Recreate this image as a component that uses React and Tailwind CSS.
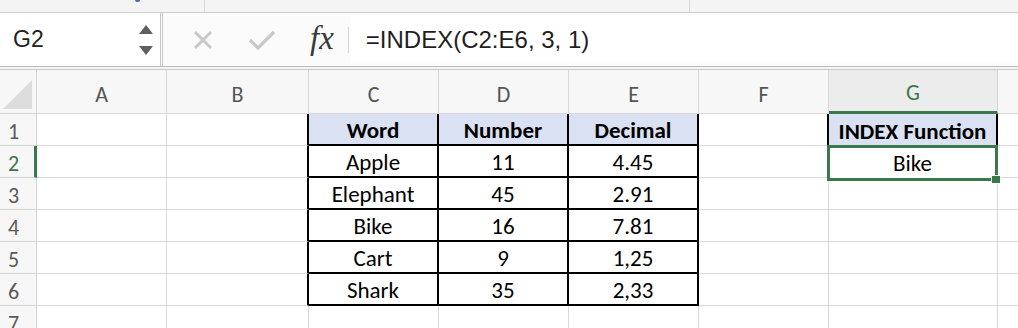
import React from "react";

const cols = [
  { key: "A", w: "w-[130px]" },
  { key: "B", w: "w-[142px]" },
  { key: "C", w: "w-[130px]" },
  { key: "D", w: "w-[130px]" },
  { key: "E", w: "w-[130px]" },
  { key: "F", w: "w-[130px]" },
  { key: "G", w: "w-[169px]" },
];

const table = [
  ["Word", "Number", "Decimal"],
  ["Apple", "11", "4.45"],
  ["Elephant", "45", "2.91"],
  ["Bike", "16", "7.81"],
  ["Cart", "9", "1,25"],
  ["Shark", "35", "2,33"],
];

const cellFont = { fontFamily: "Carlito, Lato, 'Liberation Sans', sans-serif" };

const FormulaBar = () => (
  <div style={{ fontFamily: "'Liberation Sans', Arial, sans-serif" }}>
    {/* ribbon edge */}
    <div className="h-[13px] bg-[#f4f4f4] border-b border-[#cdcdcd] flex">
      <div className="w-[135px]" />
      <div className="w-[5px] h-[2px] bg-[#3a6fc4] rounded-b" />
      <div className="w-[65px] border-r border-[#d8d8d8]" />
      <div className="w-[485px] border-r border-[#d8d8d8]" />
    </div>
    <div className="h-[53px] flex bg-[#fbfbfb]">
      {/* name box */}
      <div className="w-[163px] bg-white border-r-[3px] border-double border-[#c4c4c4] flex items-center justify-between pl-[13px] pr-[7px]">
        <span className="text-[23px] text-[#222]">G2</span>
        <div className="flex flex-col gap-[12px]">
          <svg width="14" height="9" viewBox="0 0 14 9">
            <polygon points="7,0 14,9 0,9" fill="#5f5f5f" />
          </svg>
          <svg width="14" height="9" viewBox="0 0 14 9">
            <polygon points="0,0 14,0 7,9" fill="#5f5f5f" />
          </svg>
        </div>
      </div>
      <div className="flex items-center pl-[30px]">
        <svg width="20" height="20" viewBox="0 0 20 20" stroke="#c8c8c8" strokeWidth="3" strokeLinecap="butt">
          <line x1="2" y1="2" x2="18" y2="18" />
          <line x1="18" y1="2" x2="2" y2="18" />
        </svg>
        <svg className="ml-[35px]" width="28" height="22" viewBox="0 0 28 22" fill="none" stroke="#c8c8c8" strokeWidth="3.2">
          <polyline points="2,11 10,19 26,3" />
        </svg>
        <span
          className="ml-[34px] text-[33px] italic text-[#3a3a3a] leading-none pb-[2px]"
          style={{ fontFamily: "'Liberation Serif', 'Times New Roman', serif" }}
        >
          fx
        </span>
        <div className="ml-[14px] w-px h-[26px] bg-[#d6d6d6]" />
      </div>
      <div className="flex-1 bg-white flex items-center pl-[16px] my-[3px] ml-[1px]">
        <span className="text-[24px] text-[#1f1f1f]">=INDEX(C2:E6, 3, 1)</span>
      </div>
    </div>
    <div className="h-[4px] border-t border-b border-t-[#bdbdbd] border-b-[#c9c9c9] bg-[#f4f4f4]" />
  </div>
);

const HeaderRow = () => (
  <div className="flex h-[44px]">
    <div className="w-[37px] bg-[#f7f7f7] border-r border-b border-[#d4d4d4] flex items-end justify-end pr-[4px] pb-[4px]">
      <svg width="29" height="29" viewBox="0 0 29 29">
        <polygon points="29,0 29,29 0,29" fill="#dcdcdc" />
      </svg>
    </div>
    {cols.map((c) =>
      c.key === "G" ? (
        <div
          key={c.key}
          className={`${c.w} bg-[#ececec] border-r border-[#d4d4d4] border-b-[3px] border-b-[#3a7a4a] flex items-center justify-center pt-[4px] text-[22px] text-[#3a7a4a]`}
        >
          {c.key}
        </div>
      ) : (
        <div
          key={c.key}
          className={`${c.w} bg-[#f7f7f7] border-r border-b border-[#d9d9d9] flex items-center justify-center pt-[6px] text-[22px] text-[#555]`}
        >
          {c.key}
        </div>
      )
    )}
    <div className="flex-1 bg-[#f7f7f7] border-b border-[#d9d9d9]" />
  </div>
);

const Row = ({ n }) => {
  const t = table[n - 1];
  const inTable = n >= 1 && n <= 6;
  return (
    <div className="flex h-[32px]">
      {n === 2 ? (
        <div className="w-[37px] bg-[#f7f7f7] border-r-[3px] border-r-[#3a7a4a] border-b border-b-[#d4d4d4] flex items-center pl-[8px] pt-[3px] text-[22px] text-[#3a7a4a]">
          {n}
        </div>
      ) : (
        <div className="w-[37px] bg-[#f7f7f7] border-r border-b border-[#d4d4d4] flex items-center pl-[8px] pt-[3px] text-[22px] text-[#5a5a5a]">
          {n}
        </div>
      )}
      <div className="w-[130px] border-r border-b border-[#d9d9d9]" />
      <div
        className={`w-[142px] border-b border-[#d9d9d9] ${inTable ? "border-r-2 border-r-black" : "border-r"}`}
      />
      {[0, 1, 2].map((i) =>
        inTable ? (
          <div
            key={i}
            style={cellFont}
            className={`w-[130px] border-r-2 border-b-2 border-black flex items-center justify-center pt-[3px] text-[23px] text-black ${
              n === 1 ? "bg-[#d9e1f2] font-bold" : "bg-white"
            }`}
          >
            {t[i]}
          </div>
        ) : (
          <div key={i} className="w-[130px] border-r border-b border-[#d9d9d9]" />
        )
      )}
      <div
        className={`w-[130px] border-b border-[#d9d9d9] ${n <= 2 ? "border-r-2 border-r-black" : "border-r"}`}
      />
      {n === 1 ? (
        <div
          style={cellFont}
          className="w-[169px] bg-[#d9e1f2] border-r-2 border-r-black flex items-center justify-center pt-[3px] text-[23px] font-bold text-black whitespace-nowrap"
        >
          INDEX Function
        </div>
      ) : n === 2 ? (
        <div
          style={cellFont}
          className="relative w-[169px] border-r-2 border-r-black flex items-center justify-center pt-[3px] text-[23px] text-black"
        >
          Bike
          <div className="absolute left-[-2px] top-[-1px] right-[-2px] bottom-[-3px] border-[3px] border-[#3a7a4a]" />
          <div className="absolute right-[-5px] bottom-[-6px] w-[10px] h-[9px] bg-[#3a7a4a] border border-white" />
        </div>
      ) : (
        <div className="w-[169px] border-r border-b border-[#d9d9d9]" />
      )}
      <div className="flex-1 border-b border-[#d9d9d9]" />
    </div>
  );
};

export default function App() {
  return (
    <div className="w-[1018px] h-[328px] overflow-hidden bg-white">
      <FormulaBar />
      <div style={cellFont}>
        <HeaderRow />
        {[1, 2, 3, 4, 5, 6, 7].map((n) => (
          <Row key={n} n={n} />
        ))}
      </div>
    </div>
  );
}
